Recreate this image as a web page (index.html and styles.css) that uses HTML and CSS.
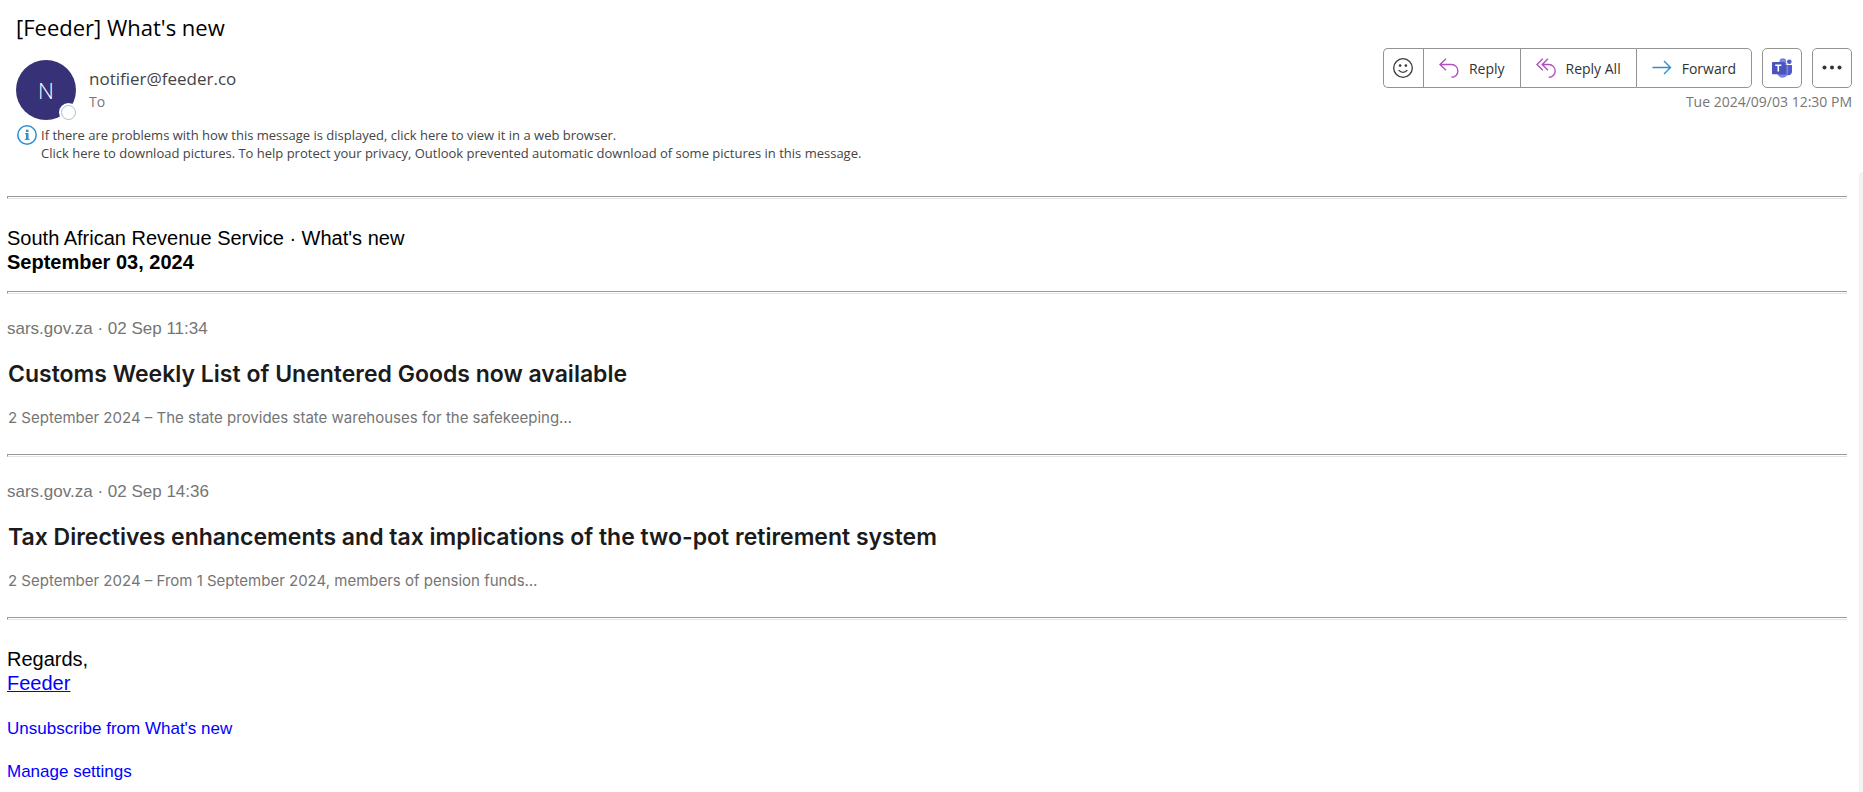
FILE: index.html
```html
<!DOCTYPE html>
<html lang="en">
<head>
    <meta charset="UTF-8">
    <meta name="viewport" content="width=device-width, initial-scale=1.0">
    <title>[Feeder] What's new</title>
    <link rel="stylesheet" href="styles.css">
</head>
<body>
    <header class="message-header">
        <h1 class="subject">[Feeder] What's new</h1>
        <div class="sender-row">
            <div class="avatar">N<span class="presence"></span></div>
            <div class="sender">
                <div class="sender-email">notifier@feeder.co</div>
                <div class="recipient">To</div>
            </div>
            <div class="actions">
                <div class="toolbar">
                    <div class="button-group">
                        <button type="button" class="icon-button" aria-label="React">
                            <svg width="20" height="20" viewBox="0 0 20 20" fill="none" stroke="#3b3b3b" stroke-width="1.3" stroke-linecap="round">
                                <circle cx="10" cy="10" r="9.3"/>
                                <path d="M6 12.4c1.9 2.5 6.1 2.5 8 0"/>
                                <circle cx="7.1" cy="7.6" r="1.3" fill="#3b3b3b" stroke="none"/>
                                <circle cx="12.9" cy="7.6" r="1.3" fill="#3b3b3b" stroke="none"/>
                            </svg>
                        </button>
                        <button type="button">
                            <svg width="20" height="20" viewBox="0 0 20 20" fill="none" stroke="#b14fc0" stroke-width="1.4">
                                <path d="M7 .8L1 6.5l6 5.7M1 6.5h11.5a6.4 6.4 0 0 1 0 12.8"/>
                            </svg>
                            Reply
                        </button>
                        <button type="button">
                            <svg width="20" height="20" viewBox="0 0 20 20" fill="none" stroke="#b14fc0" stroke-width="1.4">
                                <path d="M6.8.8L1 6.5l5.8 5.7M12 .8L6.2 6.5l5.8 5.7M6.2 6.5h6.6a6.4 6.4 0 0 1 0 12.8"/>
                            </svg>
                            Reply All
                        </button>
                        <button type="button">
                            <svg width="20" height="20" viewBox="0 0 20 20" fill="none" stroke="#2b8fd0" stroke-width="1.4">
                                <path d="M.5 9.5h18M12 3l6.5 6.5L12 16"/>
                            </svg>
                            Forward
                        </button>
                    </div>
                    <button type="button" class="icon-button" aria-label="Share to Teams">
                        <svg width="20" height="20" viewBox="0 0 20 20">
                            <circle cx="17.3" cy="3.7" r="2.3" fill="#5059c9"/>
                            <circle cx="10.8" cy="3.6" r="3.4" fill="#7b83eb"/>
                            <path d="M14 7h5.4c.4 0 .6.3.6.6v5.6a4 4 0 0 1-4 4h-2z" fill="#5059c9"/>
                            <path d="M6 7h9.3c.5 0 .8.4.8.8v6.4a5.4 5.4 0 0 1-10.8.2z" fill="#7b83eb"/>
                            <path d="M7 5h6.5c.6 0 1 .4 1 1v9.5c0 .6-.4 1-1 1H6z" fill="#3c41a0" opacity=".7"/>
                            <rect x="0" y="4" width="12.6" height="12.2" rx="1" fill="#4b53bc"/>
                            <path d="M3.2 7.2h6.2M6.3 7.2v6.4" stroke="#fff" stroke-width="1.6"/>
                        </svg>
                    </button>
                    <button type="button" class="icon-button" aria-label="More actions">
                        <svg width="20" height="20" viewBox="0 0 20 20" fill="#333">
                            <circle cx="2.5" cy="9.5" r="2"/>
                            <circle cx="10" cy="9.5" r="2"/>
                            <circle cx="17.5" cy="9.5" r="2"/>
                        </svg>
                    </button>
                </div>
                <time class="date">Tue 2024/09/03 12:30 PM</time>
            </div>
        </div>
        <div class="info-bar">
            <svg width="20" height="20" viewBox="0 0 20 20" fill="none">
                <circle cx="10" cy="10" r="9.2" stroke="#2b8fd0" stroke-width="1.5"/>
                <path d="M8 8.6h2.4M7.8 14.4h4.8" stroke="#2b8fd0" stroke-width="1"/>
                <path d="M10.2 8v6.8M10.2 4.8v2.2" stroke="#2b8fd0" stroke-width="2.6"/>
            </svg>
            <p>If there are problems with how this message is displayed, click here to view it in a web browser.<br>
            Click here to download pictures. To help protect your privacy, Outlook prevented automatic download of some pictures in this message.</p>
        </div>
    </header>

    <main class="message-body">
        <hr>
        <p class="intro">South African Revenue Service · What's new<br><strong>September 03, 2024</strong></p>
        <hr>
        <article class="post">
            <p class="source">sars.gov.za · 02 Sep 11:34</p>
            <h2>Customs Weekly List of Unentered Goods now available</h2>
            <p class="excerpt">2 September 2024 – The state provides state warehouses for the safekeeping…</p>
        </article>
        <hr>
        <article class="post">
            <p class="source">sars.gov.za · 02 Sep 14:36</p>
            <h2>Tax Directives enhancements and tax implications of the two-pot retirement system</h2>
            <p class="excerpt">2 September 2024 – From 1 September 2024, members of pension funds…</p>
        </article>
        <hr>
        <footer>
            <p class="regards">Regards,<br><a href="#">Feeder</a></p>
            <p class="footer-link"><a href="#">Unsubscribe from What's new</a></p>
            <p class="footer-link"><a href="#">Manage settings</a></p>
        </footer>
    </main>
    <div class="scroll-track"></div>
</body>
</html>
```

FILE: styles.css
```css
body {
    margin: 0;
    background-color: #fff;
    color: #000;
    font-family: "Liberation Sans", Arial, sans-serif;
    font-size: 20px;
    line-height: 24px;
}
h1, h2, p {
    margin: 0;
}

/* header */
.message-header {
    padding: 11px 11px 0 16px;
    font-family: "Open Sans", "Segoe UI", sans-serif;
    color: #444;
}
.subject {
    font-size: 22px;
    font-weight: 400;
    line-height: 32px;
    color: #000;
}
.sender-row {
    display: flex;
    gap: 13px;
    padding-top: 5px;
}
.avatar {
    position: relative;
    width: 60px;
    height: 60px;
    margin-top: 12px;
    border-radius: 50%;
    background-color: #373277;
    color: #fff;
    font-size: 22px;
    font-weight: 300;
    line-height: 60px;
    text-align: center;
}
.presence {
    position: absolute;
    right: 0;
    bottom: 0;
    width: 13px;
    height: 13px;
    border: 1px solid #a9bfcc;
    border-radius: 50%;
    background-color: #fff;
    box-shadow: 0 0 0 2px #fff;
}
.sender {
    flex: 1;
    padding-top: 19px;
}
.sender-email {
    font-size: 17px;
    line-height: 24px;
}
.recipient, .date {
    font-size: 14px;
    line-height: 22px;
    color: #767676;
}
.actions {
    display: flex;
    flex-direction: column;
    align-items: flex-end;
    gap: 3px;
}
.toolbar, .button-group {
    display: flex;
}
.toolbar {
    gap: 10px;
}
button {
    display: flex;
    align-items: center;
    box-sizing: border-box;
    height: 40px;
    padding: 0 15px;
    border: 1px solid #939393;
    border-radius: 5px;
    background-color: #fff;
    color: #333;
    font-family: inherit;
    font-size: 14px;
    gap: 10px;
    cursor: pointer;
}
button:hover {
    background-color: #f3f3f3;
}
.icon-button {
    justify-content: center;
    width: 40px;
    padding: 0;
}
.button-group button {
    border-radius: 0;
    border-right-width: 0;
}
.button-group button:first-child {
    border-radius: 5px 0 0 5px;
}
.button-group button:last-child {
    border-right-width: 1px;
    border-radius: 0 5px 5px 0;
}
.info-bar {
    display: flex;
    gap: 4px;
    padding: 5px 0 0 1px;
    font-size: 13px;
    line-height: 18px;
}
.info-bar p {
    padding-top: 1px;
}

/* mail text */
.message-body {
    padding: 34px 16px 0 7px;
}
hr {
    height: 1px;
    margin: 0;
    border: 1px solid #999;
    border-right-width: 0;
    border-bottom-color: #e3e3e3;
}
.intro {
    padding: 27px 0 17px;
}
.post {
    padding: 23px 0 24px;
}
.source {
    font-size: 17px;
    color: #757575;
}
.post h2 {
    padding: 19px 0 18px 1px;
    font-family: Inter, Aptos, sans-serif;
    font-size: 23px;
    font-weight: 600;
    line-height: 28px;
    color: #1b1b1b;
}
.excerpt {
    padding-left: 1px;
    font-family: Inter, Aptos, sans-serif;
    font-size: 15px;
    color: #757575;
}
.regards {
    padding: 27px 0 22px;
}
a {
    color: #00f;
}
.regards a {
    text-decoration-thickness: 1px;
}
.footer-link {
    padding-bottom: 19px;
    font-size: 17px;
}
.footer-link a {
    text-decoration: none;
}
.scroll-track {
    position: absolute;
    top: 172px;
    right: 0;
    bottom: 0;
    width: 4px;
    border-radius: 4px 0 0 0;
    background-color: #f3f3f3;
}
```
